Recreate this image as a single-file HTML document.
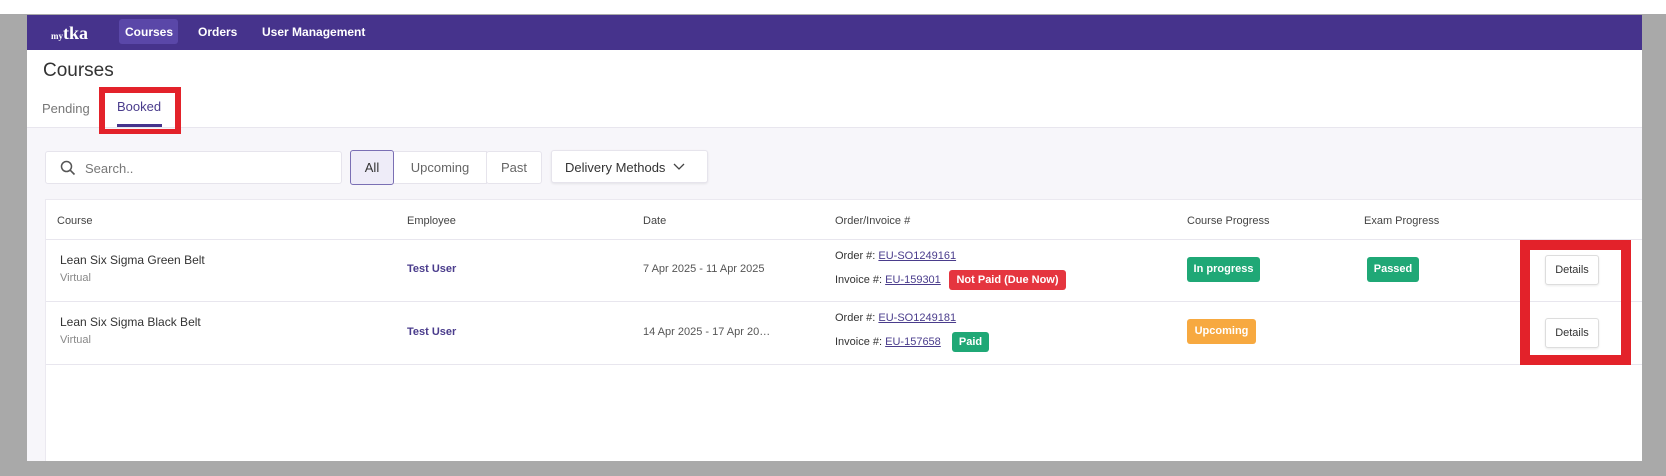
<!DOCTYPE html>
<html><head><meta charset="utf-8"><style>
*{box-sizing:border-box;margin:0;padding:0}
body{width:1666px;height:476px;background:#fff;font-family:"Liberation Sans",sans-serif;position:relative;overflow:hidden;color:#333}
.frame{position:absolute;left:0;top:14px;width:1666px;height:462px;background:#a9a9a9}
.page{position:absolute;left:27px;top:15px;width:1615px;height:446px;background:#f7f6fa;overflow:hidden}
.nav{position:absolute;left:0;top:0;width:100%;height:35px;background:#46338c;color:#fff;font-size:12px;font-weight:bold}
.nav span{position:absolute;top:10px}
.hdr{position:absolute;left:0;top:35px;width:100%;height:78px;background:#fff;border-bottom:1px solid #e8e6ee}
.abs{position:absolute}
.box{position:absolute;background:#fff;border:1px solid #e6e4ec;border-radius:3px;font-size:13px;color:#666}
.card{position:absolute;left:18px;top:184px;width:1600px;height:270px;background:#fff;border:1px solid #ebe9f0}
.th{position:absolute;top:15px;font-size:11px;color:#444}
.line{position:absolute;left:0;width:100%;height:1px;background:#e8e6ee}
.t{position:absolute;font-size:12px;color:#333}
.s{position:absolute;font-size:11px;color:#888}
a{color:#4a3c8c;text-decoration:underline}
.badge{position:absolute;color:#fff;font-size:11px;font-weight:bold;border-radius:3px;text-align:center}
.det{position:absolute;width:54px;height:30px;border:1px solid #ddd;border-radius:3px;background:#fff;font-size:11px;text-align:center;line-height:28px;box-shadow:0 1px 2px rgba(0,0,0,.08)}
.red{position:absolute;border:solid #e3222a}
</style></head><body>
<div class="frame"></div>
<div class="page">
 <div class="nav">
  <span style="left:24px;top:8px;font-family:'Liberation Serif',serif;font-weight:bold;font-size:18px"><small style="font-size:9px">my</small>tka</span>
  <div class="abs" style="left:92px;top:4px;width:59px;height:25px;background:#5a47a8;border-radius:3px"></div>
  <span style="left:98px">Courses</span>
  <span style="left:171px">Orders</span>
  <span style="left:235px">User Management</span>
 </div>
 <div class="hdr">
  <div class="abs" style="left:16px;top:10px;font-size:19px;color:#333">Courses</div>
  <div class="abs" style="left:15px;top:51px;font-size:13px;color:#777">Pending</div>
  <div class="abs" style="left:90px;top:49px;font-size:13px;color:#4a3c8c">Booked</div>
  <div class="abs" style="left:90px;top:74px;width:45px;height:3px;background:#46338c"></div>
 </div>
 <div class="box" style="left:18px;top:136px;width:297px;height:33px"><svg class="abs" style="left:14px;top:8px" width="16" height="16" viewBox="0 0 16 16"><circle cx="6.5" cy="6.5" r="5" fill="none" stroke="#555" stroke-width="1.5"/><path d="M10.2 10.2L14.5 14.5" stroke="#555" stroke-width="1.6"/></svg><span class="abs" style="left:39px;top:9px;color:#777">Search..</span></div>
 <div class="box" style="left:323px;top:135px;width:44px;height:35px;background:#eeecf8;border-color:#7a6fb4;color:#333;text-align:center;line-height:33px;z-index:2">All</div>
 <div class="box" style="left:366px;top:136px;width:94px;height:33px;text-align:center;line-height:31px;border-radius:0">Upcoming</div>
 <div class="box" style="left:459px;top:136px;width:56px;height:33px;text-align:center;line-height:31px">Past</div>
 <div class="box" style="left:524px;top:135px;width:157px;height:33px;color:#333;box-shadow:0 1px 2px rgba(0,0,0,.08)"><span class="abs" style="left:13px;top:9px">Delivery Methods</span><svg class="abs" style="left:121px;top:11px" width="12" height="9" viewBox="0 0 12 9"><path d="M1 2l5 5 5-5" fill="none" stroke="#444" stroke-width="1.3"/></svg></div>
 <div class="card">
  <div class="th" style="left:11px">Course</div>
  <div class="th" style="left:361px">Employee</div>
  <div class="th" style="left:597px">Date</div>
  <div class="th" style="left:789px">Order/Invoice #</div>
  <div class="th" style="left:1141px">Course Progress</div>
  <div class="th" style="left:1318px">Exam Progress</div>
  <div class="line" style="top:39px"></div>
  <div class="line" style="top:101px"></div>
  <div class="line" style="top:164px"></div>
  <div class="t" style="left:14px;top:53px">Lean Six Sigma Green Belt</div>
  <div class="s" style="left:14px;top:72px">Virtual</div>
  <div class="t" style="left:361px;top:63px;font-size:11px;color:#4a3c8c;font-weight:bold">Test User</div>
  <div class="s" style="left:597px;top:63px;color:#555">7 Apr 2025 - 11 Apr 2025</div>
  <div class="s" style="left:789px;top:50px;color:#333">Order #: <a>EU-SO1249161</a></div>
  <div class="s" style="left:789px;top:74px;color:#333">Invoice #: <a>EU-159301</a></div>
  <div class="badge" style="left:903px;top:70px;width:117px;height:20px;line-height:20px;background:#e5353f">Not Paid (Due Now)</div>
  <div class="badge" style="left:1141px;top:57px;width:73px;height:25px;line-height:25px;background:#1fa876">In progress</div>
  <div class="badge" style="left:1321px;top:57px;width:52px;height:25px;line-height:25px;background:#1fa876">Passed</div>
  <div class="det" style="top:55px;left:1499px">Details</div>
  <div class="t" style="left:14px;top:115px">Lean Six Sigma Black Belt</div>
  <div class="s" style="left:14px;top:134px">Virtual</div>
  <div class="t" style="left:361px;top:126px;font-size:11px;color:#4a3c8c;font-weight:bold">Test User</div>
  <div class="s" style="left:597px;top:126px;color:#555">14 Apr 2025 - 17 Apr 20…</div>
  <div class="s" style="left:789px;top:112px;color:#333">Order #: <a>EU-SO1249181</a></div>
  <div class="s" style="left:789px;top:136px;color:#333">Invoice #: <a>EU-157658</a></div>
  <div class="badge" style="left:906px;top:132px;width:37px;height:20px;line-height:20px;background:#1fa876">Paid</div>
  <div class="badge" style="left:1141px;top:119px;width:69px;height:25px;line-height:25px;background:#f7a940">Upcoming</div>
  <div class="det" style="top:118px;left:1499px">Details</div>
 </div>
</div>
<div class="red" style="left:99px;top:87px;width:82px;height:47px;border-width:6px 6px 5px 6px"></div>
<div class="red" style="left:1520px;top:240px;width:111px;height:125px;border-width:10px"></div>
</body></html>
